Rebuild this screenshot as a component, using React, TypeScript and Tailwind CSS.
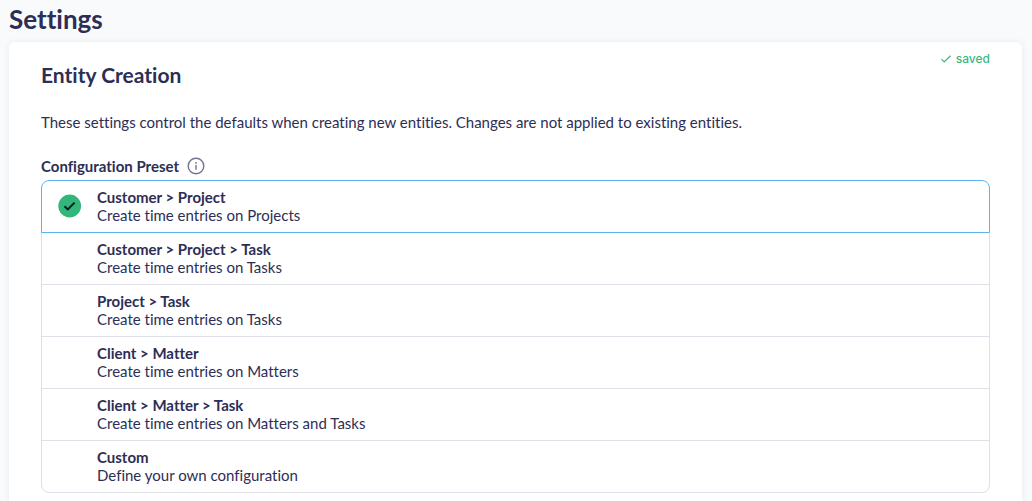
import { useState } from 'react';

const presets = [
  { id: 'customer-project', title: 'Customer > Project', description: 'Create time entries on Projects' },
  { id: 'customer-project-task', title: 'Customer > Project > Task', description: 'Create time entries on Tasks' },
  { id: 'project-task', title: 'Project > Task', description: 'Create time entries on Tasks' },
  { id: 'client-matter', title: 'Client > Matter', description: 'Create time entries on Matters' },
  { id: 'client-matter-task', title: 'Client > Matter > Task', description: 'Create time entries on Matters and Tasks' },
  { id: 'custom', title: 'Custom', description: 'Define your own configuration' },
];

function SelectedIcon() {
  return (
    <svg className="w-6 h-6" viewBox="0 0 24 24" fill="none" aria-hidden="true">
      <circle cx="11.7" cy="12" r="11.4" fill="#33b679" />
      <path d="M6.5 12.2l3.3 3.2 6.8-6.8" stroke="#0b1a20" strokeWidth="2" />
    </svg>
  );
}

function InfoIcon() {
  return (
    <svg className="w-[18px] h-[18px]" viewBox="0 0 18 18" fill="none" aria-hidden="true">
      <circle cx="9" cy="9" r="7.8" stroke="#73738f" strokeWidth="1.4" />
      <path d="M9 8v4.8" stroke="#73738f" strokeWidth="1.4" />
      <circle cx="9" cy="5.9" r="0.9" fill="#73738f" />
    </svg>
  );
}

export default function SettingsPage() {
  const [selected, setSelected] = useState('customer-project');

  return (
    <div className="flex min-h-screen flex-col bg-[#f9fafc] pr-[10px] pl-[9px] pt-1 font-['Lato',sans-serif] text-[#2d2e55] [font-variant-ligatures:none]">
      <h1 className="text-[26px] leading-[30px] font-bold">Settings</h1>

      <main className="mt-2 flex-1 rounded-t-md bg-white px-8 pt-[9px] pb-2 shadow-[0_0_6px_rgba(45,46,85,0.08)]">
        {/* Section header */}
        <div className="flex items-start justify-between">
          <h2 className="pt-3 text-[21px] leading-6 font-bold">Entity Creation</h2>
          <div role="status" className="flex items-center gap-1 font-['Inter',sans-serif] text-xs leading-4 font-medium text-[#3db87c]">
            <svg className="w-3 h-3" viewBox="0 0 12 12" fill="none" aria-hidden="true">
              <path d="M1.5 6.2l2.7 2.7 6.3-6.2" stroke="currentColor" strokeWidth="1.2" />
            </svg>
            saved
          </div>
        </div>

        <p className="mt-[26px] text-[15px] leading-[18px]">
          These settings control the defaults when creating new entities. Changes are not applied to existing entities.
        </p>

        {/* Presets */}
        <fieldset className="mt-[26px] min-w-0">
          <legend className="mb-[5px] flex items-center gap-2 text-[15px] leading-[18px] font-bold">
            Configuration Preset
            <button type="button" aria-label="About configuration presets">
              <InfoIcon />
            </button>
          </legend>

          {presets.map((preset) => (
            <label
              key={preset.id}
              className={`relative -mb-px flex min-h-[53px] cursor-pointer items-start border px-4 pt-[7px] pb-2 first-of-type:rounded-t-lg last-of-type:mb-0 last-of-type:rounded-b-lg ${
                selected === preset.id ? 'z-10 border-[#5bb4ee]' : 'border-[#dfdfe8]'
              }`}
            >
              <input
                type="radio"
                name="preset"
                value={preset.id}
                checked={selected === preset.id}
                onChange={() => setSelected(preset.id)}
                className="sr-only"
              />
              <span className="mr-[15px] flex w-6 shrink-0 self-center">{selected === preset.id && <SelectedIcon />}</span>
              <span className="flex flex-col text-[15px] leading-[18px]">
                <span className="font-bold">{preset.title}</span>
                <span>{preset.description}</span>
              </span>
            </label>
          ))}
        </fieldset>
      </main>
    </div>
  );
}
